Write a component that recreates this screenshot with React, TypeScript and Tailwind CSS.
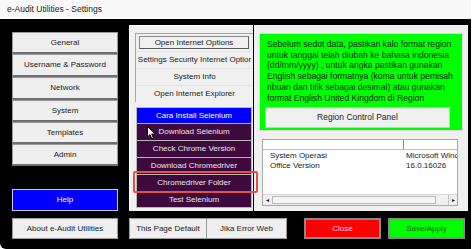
import React from 'react'

const NAV = [
  { label: 'General', h: 'h-[22px]' },
  { label: 'Username & Password', h: 'h-[23px]' },
  { label: 'Network', h: 'h-[23px]' },
  { label: 'System', h: 'h-[22px]' },
  { label: 'Templates', h: 'h-[22px]' },
  { label: 'Admin', h: 'h-[22px]' },
]

const INTERNET = ['Settings Security Internet Optior', 'System Info', 'Open Internet Explorer']

const SELENIUM = [
  'Download Selenium',
  'Check Chrome Version',
  'Download Chromedriver',
  'Chromedriver Folder',
  'Test Selenium',
]

const NOTE = [
  'Sebelum sedot data, pastikan kalo format region',
  'untuk tanggal telah diubah ke bahasa indonesia',
  '(dd/mm/yyyy) , untuk angka pastikan gunakan',
  'English sebagai formatnya (koma untuk pemisah',
  'ribuan dan titik sebagai desimal) atau gunakan',
  'format English United Kingdom di Region',
]

function Cursor(): React.JSX.Element {
  return (
    <svg width="10" height="14" viewBox="0 0 10 14" className="absolute left-[147px] top-[126px]">
      <path d="M0.5 0.5 L0.5 11 L3 8.6 L4.8 12.8 L6.4 12.1 L4.7 8 L8 8 Z" fill="#fff" stroke="#000" strokeWidth="1" />
    </svg>
  )
}

export default function App(): React.JSX.Element {
  return (
    <div className="relative h-[249px] w-[474px] overflow-hidden bg-white font-['Liberation_Sans',Arial,sans-serif] text-[8px] text-[#1a1a1a]">
      <div className="flex h-full w-[471px] flex-col">
        <div className="flex h-[19px] items-center bg-[#f9f9f9] pl-[7px] text-[8.5px] text-[#222]">
          e-Audit Utilities - Settings
        </div>

        <div className="flex flex-1 rounded-bl-[6px] bg-black pl-[12px]">
          {/* left navigation */}
          <div className="flex w-[106px] flex-col pt-[13px]">
            {NAV.map((n) => (
              <div
                key={n.label}
                className={`${n.h} flex items-center justify-center border border-b-2 border-[#9a9a9a] border-b-[#6f6f6f] bg-[#efefef]`}
              >
                {n.label}
              </div>
            ))}
            <div className="mt-[23px] flex h-[22px] items-center justify-center border border-[#c8c8ff] bg-[#0000ff] text-white">
              Help
            </div>
            <div className="mt-[7px] flex h-[21px] items-center justify-center border border-[#9a9a9a] bg-[#efefef]">
              About e-Audit Utilities
            </div>
          </div>

          <div className="ml-[11px] flex w-[339px] flex-col pt-[6px]">
            <div className="flex h-[186px]">
              {/* middle panel */}
              <div className="flex w-[124px] flex-col overflow-hidden border-l border-t border-[#fdfdfd] bg-[#f0f0f0]">
                <div className="ml-[5px] mt-[7px] flex flex-col border-l border-t border-[#a6a6a6]">
                  <div className="flex h-[17px] items-center pl-[3px] pr-[4px]">
                    <div className="flex h-[13px] flex-1 items-center justify-center border border-[#5a5a5a] border-l-[#8a8a8a] border-t-[#8a8a8a] bg-[#f0f0f0]">
                      Open Internet Options
                    </div>
                  </div>
                  {INTERNET.map((t) => (
                    <div
                      key={t}
                      className="flex h-[17px] items-center justify-center overflow-hidden whitespace-nowrap border-t border-[#e4e4e4] px-[4px]"
                    >
                      <span className="shrink-0">{t}</span>
                    </div>
                  ))}
                </div>

                <div className="ml-[6px] mt-[5px] flex w-[116px] flex-col">
                  <div className="flex h-[17px] items-center justify-center border border-[#b8b8b8] bg-[#0000ff] text-white">
                    Cara Install Selenium
                  </div>
                  {SELENIUM.map((t, i) => (
                    <div
                      key={t}
                      className={`${i === 4 ? 'h-[16px]' : 'h-[17px]'} flex items-center justify-center border border-t-0 border-[#b8b8b8] bg-[#3e0a3e] text-[#ece4ec]`}
                    >
                      {t}
                    </div>
                  ))}
                </div>
              </div>

              {/* right panel */}
              <div className="ml-[1px] flex w-[214px] flex-col bg-[#f0f0f0]">
                <div className="ml-[5px] mt-[8px] flex h-[98px] w-[204px] flex-col border border-[#d8d8d8] bg-[#00ff00]">
                  <div className="flex flex-col whitespace-nowrap pl-[7px] pt-[5px] text-[8.6px] leading-[10.7px] text-[#062906]">
                    {NOTE.map((l) => (
                      <span key={l}>{l}</span>
                    ))}
                  </div>
                  <div className="ml-[5px] mt-[4px] flex h-[21px] w-[185px] items-center justify-center border border-[#c8c8c8] bg-[#f0f0f0] text-[8.5px]">
                    Region Control Panel
                  </div>
                </div>

                <div className="ml-[8px] mt-[8px] flex h-[67px] w-[196px] flex-col border border-[#a8a8a8] bg-white">
                  <div className="flex h-[10px] border-b border-[#bdbdbd]">
                    <div className="w-[141px] border-r border-[#8a8a8a]" />
                  </div>
                  <div className="flex flex-1 pt-[1px] leading-[9.5px]">
                    <div className="flex w-[141px] flex-col pl-[7px]">
                      <span>System Operasi</span>
                      <span>Office Version</span>
                    </div>
                    <div className="flex flex-col overflow-hidden whitespace-nowrap pl-[6px]">
                      <span>Microsoft Winc</span>
                      <span>16.0.16026</span>
                    </div>
                  </div>
                  <div className="flex h-[11px] border-t border-[#d8d8d8] bg-[#f0f0f0]">
                    <div className="flex w-[9px] items-center justify-center text-[6px]">◂</div>
                    <div className="my-[1px] flex-1 border border-[#b8b8b8] bg-[#f6f6f6]" />
                    <div className="w-[12px]" />
                    <div className="flex w-[9px] items-center justify-center border-l border-[#c8c8c8] text-[6px]">▸</div>
                  </div>
                </div>
              </div>
            </div>

            {/* bottom buttons */}
            <div className="mt-[7px] flex h-[21px]">
              <div className="flex w-[78px] items-center justify-center border border-[#9a9a9a] bg-[#efefef]">
                This Page Default
              </div>
              <div className="flex w-[80px] items-center justify-center border border-l-0 border-[#9a9a9a] bg-[#efefef]">
                Jika Error Web
              </div>
              <div className="ml-[17px] flex w-[77px] items-center justify-center border-2 border-[#8a8a8a] bg-[#ff0000] text-[#ffd6d6]">
                Close
              </div>
              <div className="ml-[7px] flex w-[77px] items-center justify-center border-2 border-[#8a8a8a] bg-[#00ff00] text-[#125812]">
                Save/Apply
              </div>
            </div>
          </div>
        </div>
      </div>

      <div className="absolute left-[133px] top-[171px] h-[22px] w-[125px] rounded-[2px] border-2 border-[#e2514c]" />
      <Cursor />
    </div>
  )
}
